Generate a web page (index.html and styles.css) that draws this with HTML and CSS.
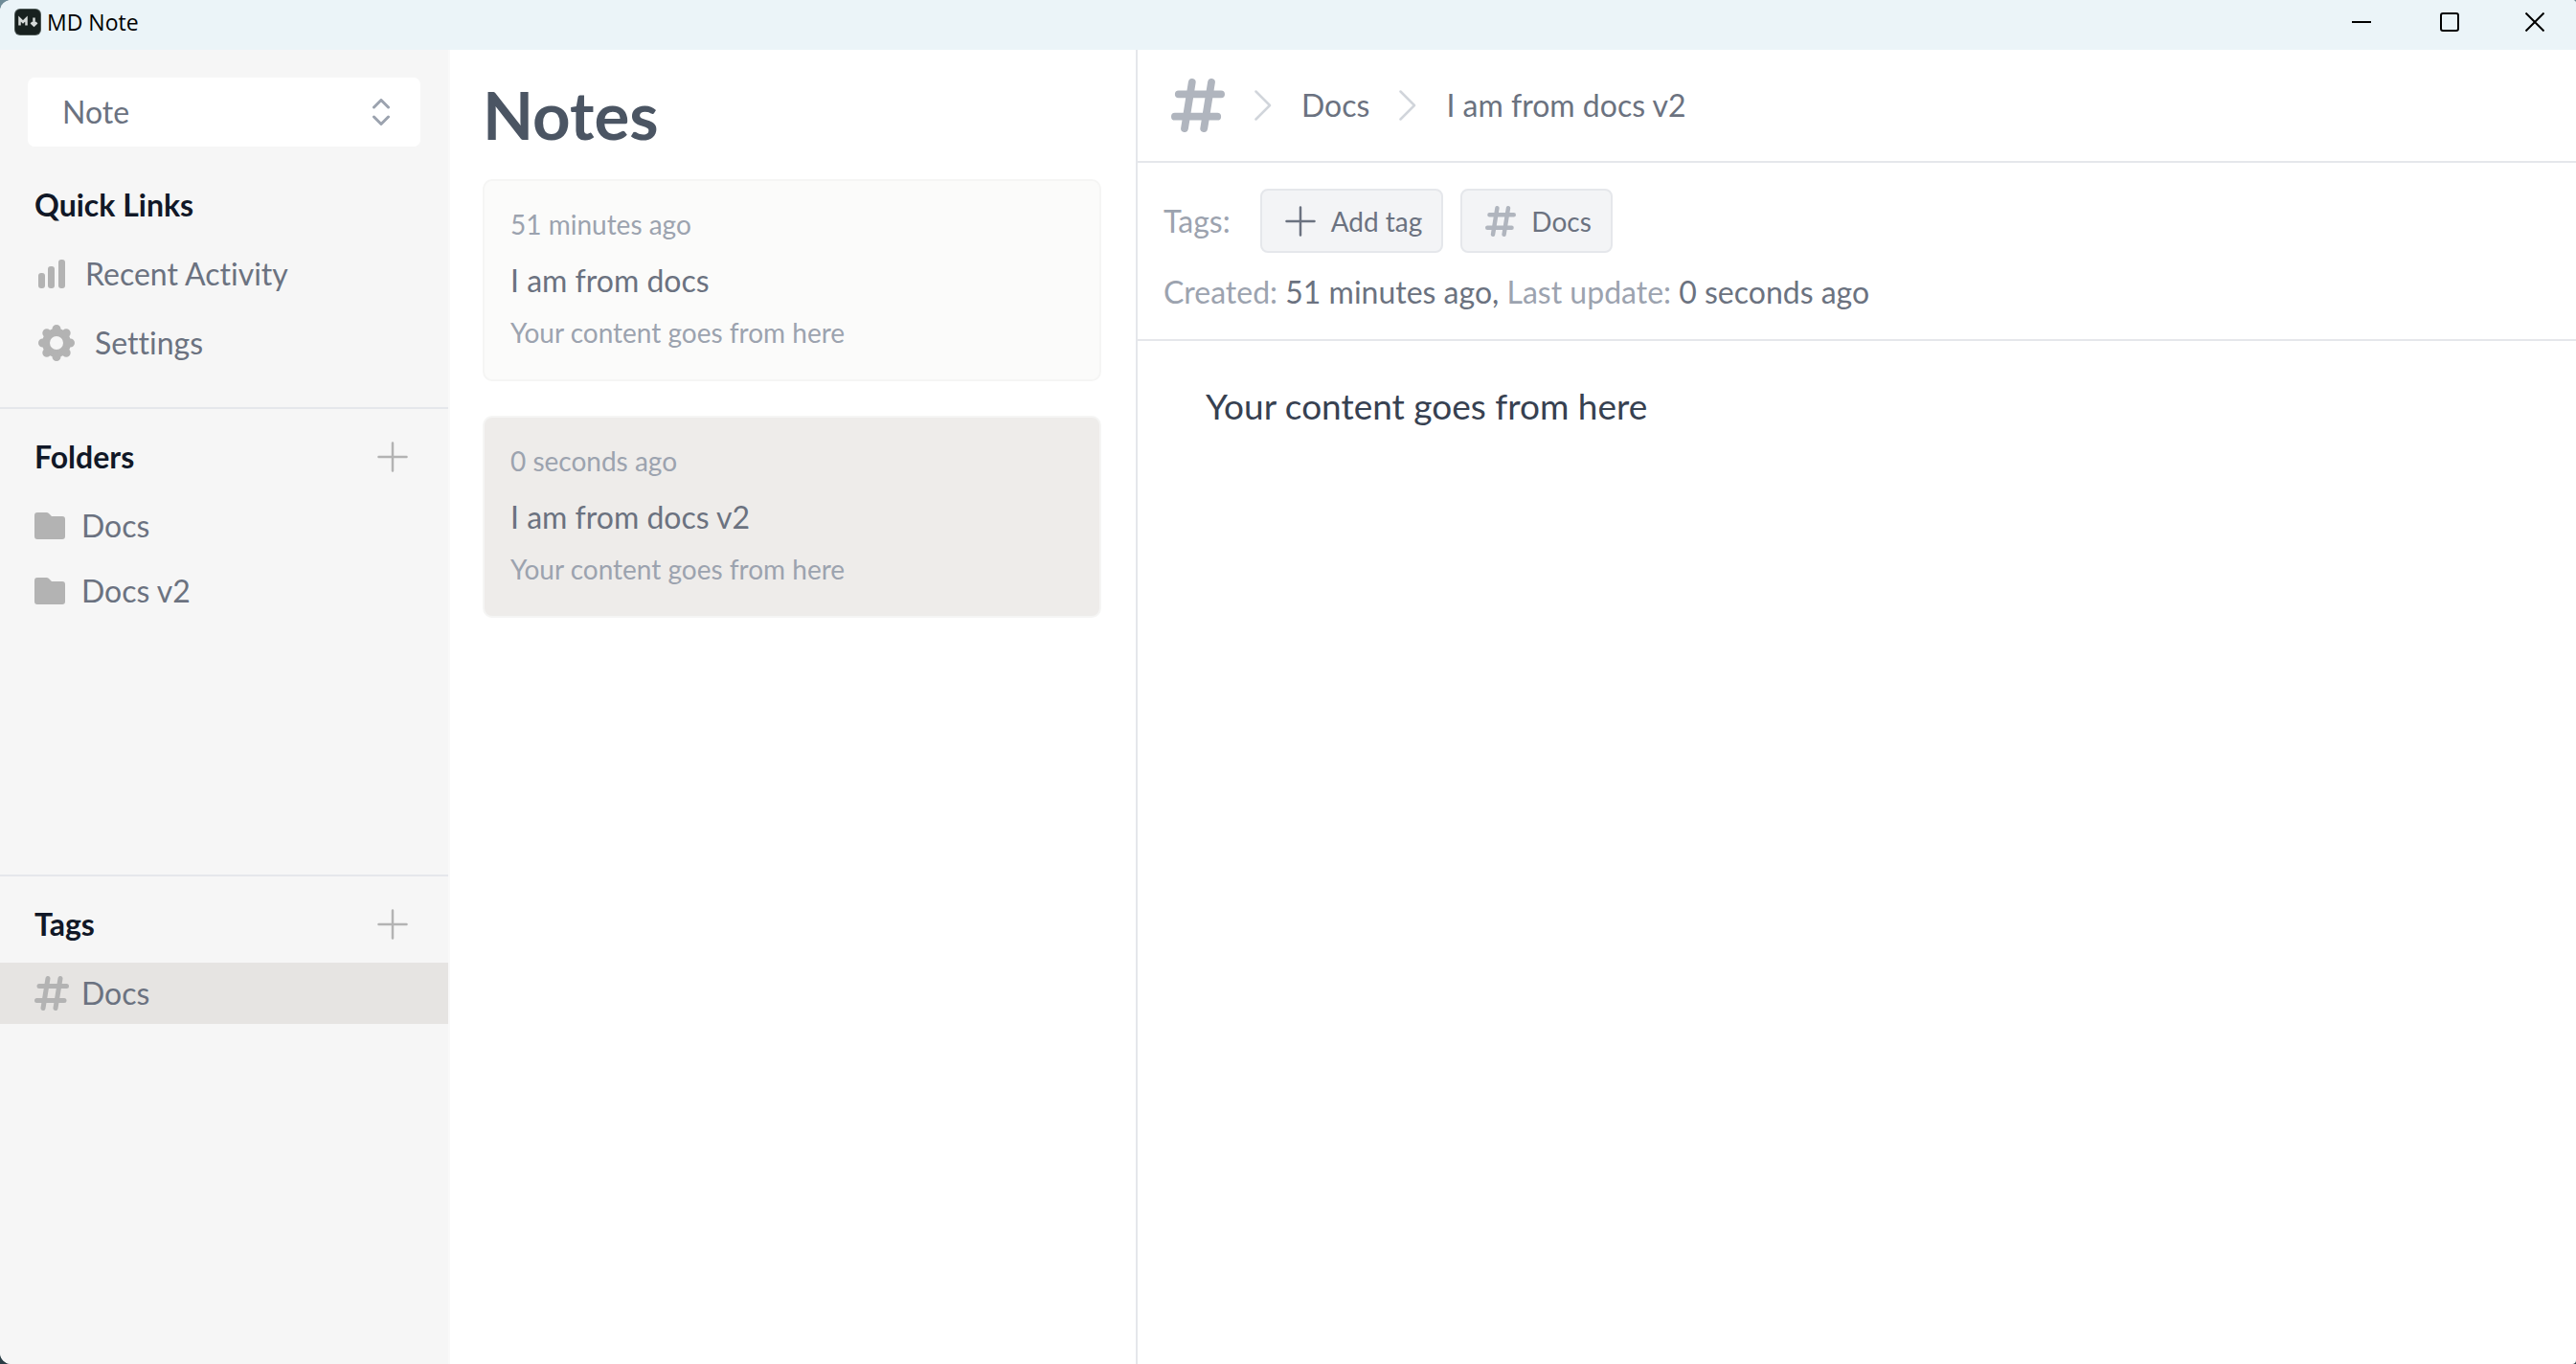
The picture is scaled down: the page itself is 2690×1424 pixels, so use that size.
FILE: index.html
```html
<!DOCTYPE html>
<html lang="en">
<head>
  <meta charset="utf-8">
  <title>MD Note</title>
  <link rel="stylesheet" href="styles.css">
</head>
<body>
  <svg class="sprite" aria-hidden="true">
    <symbol id="hash" viewBox="0 0 36 36">
      <path d="M14 2.500 9 33.500M27 2.500 22 33.500M5 10.500H33.500M2.500 25.500H31" fill="none" stroke="currentColor" stroke-width="5" stroke-linecap="round"/>
    </symbol>
    <symbol id="plus" viewBox="0 0 32 32">
      <path d="M16 1.500V30.500M1.500 16H30.500" fill="none" stroke="currentColor" stroke-width="2.500" stroke-linecap="round"/>
    </symbol>
    <symbol id="folder" viewBox="0 0 32 28">
      <path d="M3 0H12.500Q14 0 15 1L18 4H29Q32 4 32 7V25Q32 28 29 28H3Q0 28 0 25V3Q0 0 3 0Z" fill="currentColor"/>
    </symbol>
    <symbol id="chevron" viewBox="0 0 18 32">
      <path d="M1.500 1.500 16 16 1.500 30.500" fill="none" stroke="currentColor" stroke-width="2.500" stroke-linecap="round" stroke-linejoin="round"/>
    </symbol>
  </svg>

  <div class="window">
    <header class="titlebar">
      <svg class="app-logo" viewBox="0 0 28 28" aria-hidden="true">
        <rect width="28" height="28" rx="6" fill="#4b5654"/>
        <rect x="1" y="1" width="26" height="26" rx="5" fill="#18211f"/>
        <path d="M5.500 17.500V10.500L9 14 12.500 10.500V17.500M20.500 9.500V17M17.500 14.500 20.500 17.500 23.500 14.500" fill="none" stroke="#d5d9d8" stroke-width="2.500"/>
      </svg>
      <span class="app-name">MD Note</span>
      <div class="window-controls">
        <button type="button" aria-label="Minimize"><svg viewBox="0 0 20 20"><path d="M0 10H20"/></svg></button>
        <button type="button" aria-label="Maximize"><svg viewBox="0 0 20 20"><rect x="1" y="1" width="18" height="18" rx="2"/></svg></button>
        <button type="button" aria-label="Close"><svg viewBox="0 0 20 20"><path d="M.5.5 19.500 19.500M19.500.5.5 19.500"/></svg></button>
      </div>
    </header>

    <div class="layout">
      <aside class="sidebar">
        <section class="quick">
          <div class="picker">
            <select aria-label="Type"><option>Note</option></select>
            <svg viewBox="0 0 18 28" aria-hidden="true"><path d="M1.500 9 9 1.500 16.500 9M1.500 19 9 26.500 16.500 19"/></svg>
          </div>
          <h2>Quick Links</h2>
          <nav class="links">
            <a href="#recent">
              <svg class="icon-bars" viewBox="0 0 28 30" aria-hidden="true"><rect y="14" width="7" height="16" rx="3"/><rect x="10" y="7" width="7" height="23" rx="3"/><rect x="21" width="7" height="30" rx="3"/></svg>
              Recent Activity
            </a>
            <a href="#settings">
              <svg class="icon-gear" viewBox="0 0 38 38" aria-hidden="true">
                <circle cx="19" cy="19" r="11" fill="none" stroke="currentColor" stroke-width="8"/>
                <path d="M19 5V4.500M28.900 9.100 29.200 8.800M33 19H33.500M28.900 28.900 29.200 29.200M19 33V33.500M9.100 28.900 8.800 29.200M5 19H4.500M9.100 9.100 8.800 8.800" stroke="currentColor" stroke-width="9" stroke-linecap="round"/>
              </svg>
              Settings
            </a>
          </nav>
        </section>

        <section class="group folders">
          <div class="group-head">
            <h2>Folders</h2>
            <button type="button" aria-label="Add folder"><svg class="icon-plus"><use href="#plus"/></svg></button>
          </div>
          <nav>
            <a href="#docs"><svg class="icon-folder"><use href="#folder"/></svg>Docs</a>
            <a href="#docs-v2"><svg class="icon-folder"><use href="#folder"/></svg>Docs v2</a>
          </nav>
        </section>

        <section class="group tags">
          <div class="group-head">
            <h2>Tags</h2>
            <button type="button" aria-label="Add tag to list"><svg class="icon-plus"><use href="#plus"/></svg></button>
          </div>
          <nav>
            <a class="selected" href="#tag-docs"><svg class="icon-hash"><use href="#hash"/></svg>Docs</a>
          </nav>
        </section>
      </aside>

      <section class="notes">
        <h1>Notes</h1>
        <div class="cards">
          <article class="card">
            <p class="minor">51 minutes ago</p>
            <h3>I am from docs</h3>
            <p class="minor">Your content goes from here</p>
          </article>
          <article class="card active">
            <p class="minor">0 seconds ago</p>
            <h3>I am from docs v2</h3>
            <p class="minor">Your content goes from here</p>
          </article>
        </div>
      </section>

      <main class="detail">
        <nav class="breadcrumb" aria-label="Breadcrumb">
          <svg class="crumb-hash"><use href="#hash"/></svg>
          <svg class="crumb-sep"><use href="#chevron"/></svg>
          <a href="#tag-docs">Docs</a>
          <svg class="crumb-sep"><use href="#chevron"/></svg>
          <a href="#note">I am from docs v2</a>
        </nav>
        <div class="meta">
          <div class="tag-row">
            <span class="label">Tags:</span>
            <button class="chip" type="button"><svg class="icon-plus"><use href="#plus"/></svg>Add tag</button>
            <button class="chip" type="button"><svg class="chip-hash"><use href="#hash"/></svg>Docs</button>
          </div>
          <p class="dates"><span class="label">Created:</span> 51 minutes ago, <span class="label">Last update:</span> 0 seconds ago</p>
        </div>
        <div class="content"><p>Your content goes from here</p></div>
      </main>
    </div>
  </div>
</body>
</html>
```
FILE: styles.css
```css
* { box-sizing: border-box; }

body {
  margin: 0;
  background: linear-gradient(#6f8c98, #2a3d45);
  color: #6b7280;
  font: 32px/40px Lato, "Noto Sans", sans-serif;
  font-variant-ligatures: none;
}

h1, h2, h3, p { margin: 0; }
a { color: inherit; text-decoration: none; }
button, select { font: inherit; color: inherit; border: 0; background: none; padding: 0; }
svg { display: block; flex: none; }
.sprite { display: none; }

.window {
  display: flex;
  flex-direction: column;
  min-height: 100vh;
  border-radius: 12px 4px 4px 12px;
  overflow: hidden;
  background: #fff;
}

/* Title bar */
.titlebar {
  display: flex;
  align-items: center;
  height: 52px;
  padding: 0 0 6px 15px;
  background: #ebf4f8;
}
.app-logo { width: 28px; height: 28px; }
.app-name {
  margin-left: 6px;
  color: #000;
  font: 23px/28px "Open Sans", sans-serif;
}
.window-controls { display: flex; margin-left: auto; }
.window-controls button { display: grid; place-items: center; width: 92px; height: 46px; }
.window-controls button:last-child { width: 86px; }
.window-controls svg { width: 20px; height: 20px; fill: none; stroke: #000; stroke-width: 2; }

.layout { display: grid; flex: 1; grid-template-columns: 470px 716px 1fr; }

/* Sidebar */
.sidebar {
  display: flex;
  flex-direction: column;
  border-right: 2px solid #f9f9f9;
  background: #f6f6f6;
}
.sidebar h2 { color: #111827; font-size: 32px; font-weight: 700; line-height: 64px; }
.quick { padding-bottom: 35px; }
.quick h2 { padding-left: 36px; }
.picker { display: grid; align-items: center; margin: 29px; }
.picker > * { grid-area: 1 / 1; }
.picker select {
  width: 100%;
  height: 72px;
  padding: 0 80px 0 36px;
  border-radius: 7px;
  background: #fff;
  appearance: none;
}
.picker svg {
  justify-self: end;
  width: 18px;
  height: 28px;
  margin-right: 32px;
  fill: none;
  stroke: #9ca3af;
  stroke-width: 3;
  stroke-linecap: round;
  stroke-linejoin: round;
  pointer-events: none;
}
.sidebar nav a { display: flex; align-items: center; height: 64px; padding-left: 36px; }
.sidebar nav svg, .group-head svg { color: #b3b3b3; }
.links a { margin-top: 8px; }
.sidebar .links a { gap: 21px; padding-left: 40px; }
.icon-bars { width: 28px; height: 30px; fill: currentColor; }
.icon-gear { width: 38px; height: 38px; }

.group { padding-top: 18px; border-top: 2px solid #e5e7eb; }
.folders { flex: 21 0 0; }
.tags { flex: 22 0 0; }
.group-head { display: flex; align-items: center; justify-content: space-between; padding: 0 42px 0 36px; margin-bottom: 8px; }
.icon-plus { width: 32px; height: 32px; }
.group a + a { margin-top: 4px; }
.group nav a { gap: 17px; }
.icon-folder { width: 32px; height: 28px; }
.icon-hash { width: 36px; height: 36px; }
.group nav a:has(.icon-hash) { gap: 13px; }
.sidebar .selected { background: #e6e4e2; }

/* Note list */
.notes { padding: 28px 36px 28px 34px; }
.notes h1 { margin-bottom: 27px; color: #4b5563; font-size: 69px; font-weight: 700; line-height: 80px; }
.cards { display: grid; gap: 36px; }
.card {
  padding: 29px 27px 33px;
  border: 2px solid #f5f5f4;
  border-radius: 10px;
  background: #fbfbfa;
}
.card.active { background: #eeecea; }
.minor { color: #9ca3af; font-size: 28px; line-height: 32px; }
.card h3 { margin: 23px 0 18px; font-size: 32px; font-weight: 400; line-height: 40px; }

/* Open note */
.detail { border-left: 2px solid #e5e7eb; }
.breadcrumb {
  display: flex;
  align-items: center;
  height: 118px;
  padding-left: 34px;
  border-bottom: 2px solid #e5e7eb;
}
.crumb-hash { width: 58px; height: 56px; margin-right: 30px; color: #b0b5be; }
.crumb-sep { width: 18px; height: 32px; color: #d1d5db; }
.breadcrumb a { padding: 0 31px; }

.meta { padding: 27px 27px 29px; border-bottom: 2px solid #e5e7eb; }
.label { color: #9ca3af; }
.tag-row { display: flex; align-items: center; gap: 18px; }
.tag-row .label { margin-right: 13px; }
.chip {
  display: flex;
  align-items: center;
  gap: 16px;
  height: 67px;
  padding: 0 20px 0 24px;
  border: 2px solid #e5e7eb;
  border-radius: 8px;
  background: #f3f4f6;
  font-size: 28px;
}
.chip-hash { width: 32px; height: 32px; color: #b0b5be; }
.dates { margin-top: 21px; }
.content { padding: 40px 71px; color: #374151; font-size: 37px; line-height: 56px; }
```
